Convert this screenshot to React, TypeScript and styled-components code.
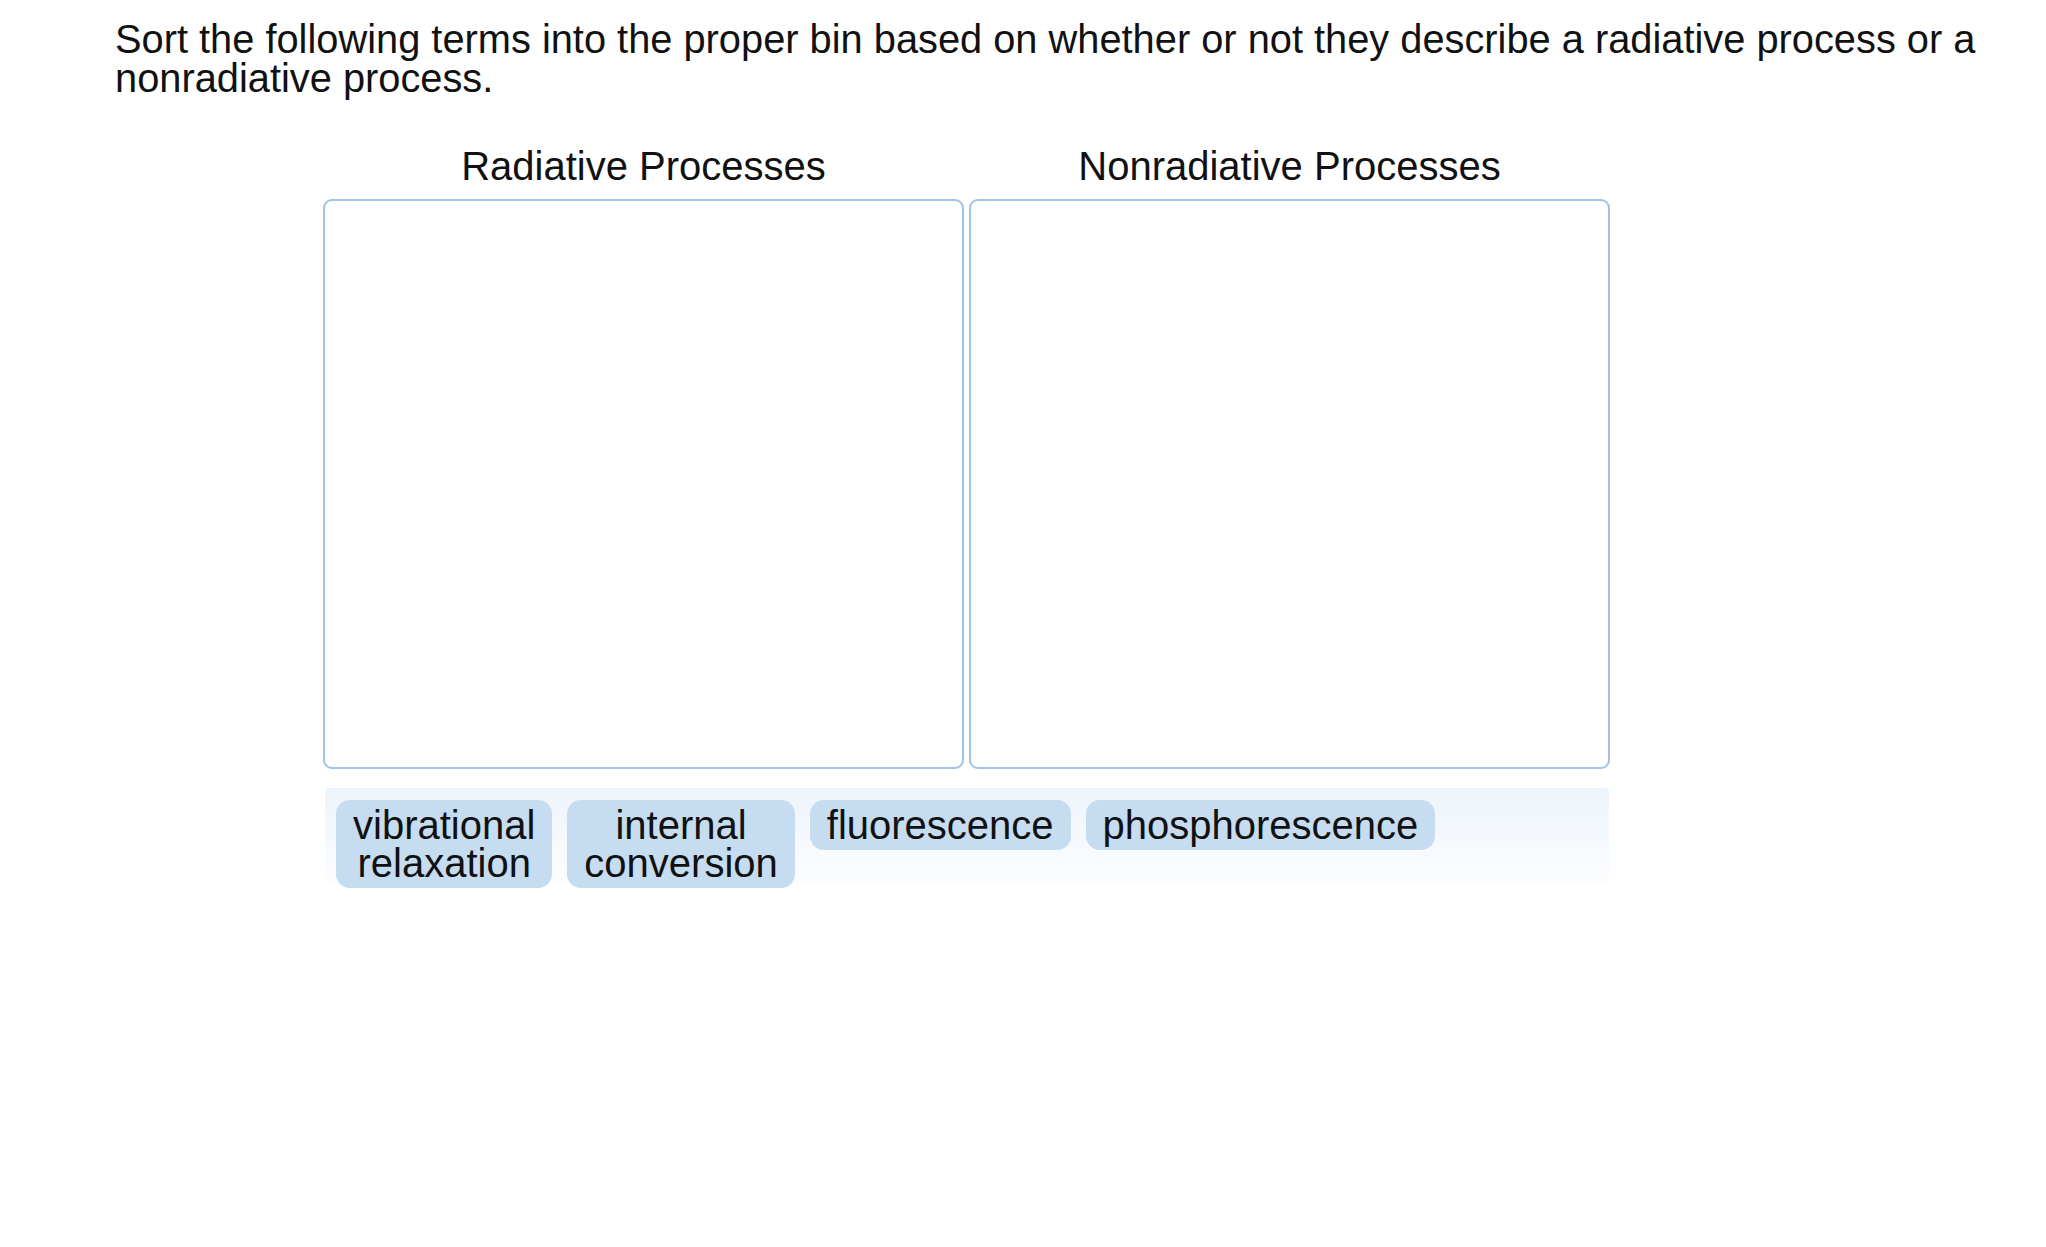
import React from "react";
import styled, { createGlobalStyle } from "styled-components";

const GlobalStyle = createGlobalStyle`
  html, body {
    margin: 0;
    padding: 0;
    background: #ffffff;
  }
  body {
    font-family: "Liberation Sans", Arial, Helvetica, sans-serif;
    color: #111111;
  }
`;

const Page = styled.main`
  padding: 20px 40px 40px 115px;
`;

const Prompt = styled.p`
  margin: 0;
  width: 1900px;
  font-size: 39.8px;
  line-height: 39px;
  color: #111111;
`;

const Board = styled.section`
  margin: 49px 0 0 208px;
  width: 1287px;
  display: flex;
  flex-direction: column;
`;

const Columns = styled.div`
  display: grid;
  grid-template-columns: 1fr 1fr;
  column-gap: 5px;
`;

const BinTitle = styled.h3`
  margin: 0 0 13px;
  text-align: center;
  font-size: 40px;
  line-height: 39px;
  font-weight: normal;
  color: #111111;
`;

const Bin = styled.div`
  box-sizing: border-box;
  height: 570px;
  border: 2px solid #9ec4ea;
  border-radius: 9px;
  background: #ffffff;
`;

const Tray = styled.div`
  box-sizing: border-box;
  height: 95px;
  margin: 19px 1px 0 2px;
  padding: 12px 11px;
  display: flex;
  align-items: flex-start;
  gap: 15px;
  border-radius: 4px;
  background: linear-gradient(to bottom, #edf4fb 0%, #f5f9fd 55%, #fcfdff 100%);
`;

const Chip = styled.div`
  padding: 6px 17px;
  border-radius: 14px;
  background: #c6dcf1;
  font-size: 40px;
  line-height: 38px;
  text-align: center;
  color: #111111;
  white-space: nowrap;
`;

const ChipLine = styled.span`
  display: block;
`;

const bins = ["Radiative Processes", "Nonradiative Processes"];

const terms: string[][] = [
  ["vibrational", "relaxation"],
  ["internal", "conversion"],
  ["fluorescence"],
  ["phosphorescence"],
];

export default function App() {
  return (
    <>
      <GlobalStyle />
      <Page>
        <Prompt>
          Sort the following terms into the proper bin based on whether or not they describe a
          radiative process or a nonradiative process.
        </Prompt>
        <Board>
          <Columns>
            {bins.map((b) => (
              <BinTitle key={b}>{b}</BinTitle>
            ))}
            {bins.map((b) => (
              <Bin key={b + "-drop"} />
            ))}
          </Columns>
          <Tray>
            {terms.map((lines) => (
              <Chip key={lines.join(" ")}>
                {lines.map((l) => (
                  <ChipLine key={l}>{l}</ChipLine>
                ))}
              </Chip>
            ))}
          </Tray>
        </Board>
      </Page>
    </>
  );
}
